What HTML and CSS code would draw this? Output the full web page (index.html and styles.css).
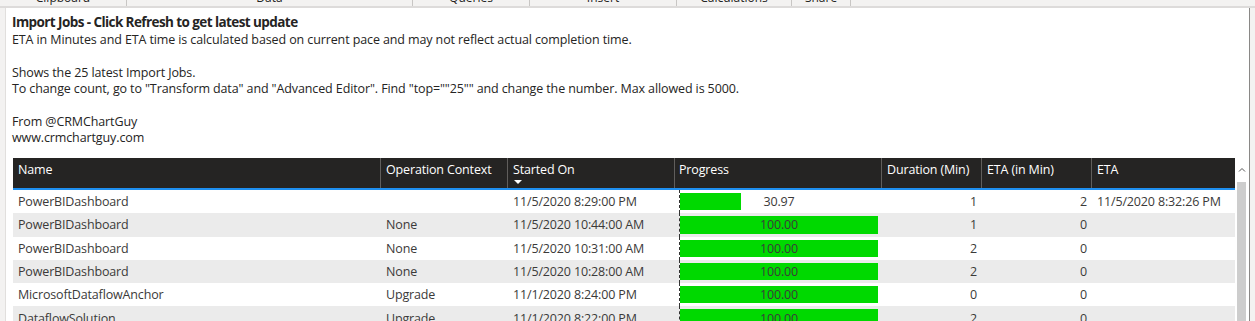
FILE: index.html
```html
<!DOCTYPE html>
<html>
<head>
<meta charset="utf-8">
<link rel="stylesheet" href="styles.css">
</head>
<body>
<div class="ribbon">
  <div class="ribbon-row">
    <div class="grp g-clip">Clipboard</div>
    <div class="grp g-data">Data</div>
    <div class="grp g-queries">Queries</div>
    <div class="grp g-insert">Insert</div>
    <div class="grp g-calc">Calculations</div>
    <div class="grp g-share">Share</div>
  </div>
</div>
<div class="pane">
  <div class="textbox">
    <div class="title">Import Jobs - Click Refresh to get latest update</div>
    <div class="line">ETA in Minutes and ETA time is calculated based on current pace and may not reflect actual completion time.</div>
    <div class="line blank">&nbsp;</div>
    <div class="line">Shows the 25 latest Import Jobs.</div>
    <div class="line">To change count, go to "Transform data" and "Advanced Editor". Find "top=""25"" and change the number. Max allowed is 5000.</div>
    <div class="line blank">&nbsp;</div>
    <div class="line">From @CRMChartGuy</div>
    <div class="line">www.crmchartguy.com</div>
  </div>
  <div class="table-wrap">
    <div class="table">
      <div class="row head">
        <div class="c c-name">Name</div>
        <div class="c c-op">Operation Context</div>
        <div class="c c-start">Started On<span class="sort"></span></div>
        <div class="c c-prog">Progress</div>
        <div class="c c-dur">Duration (Min)</div>
        <div class="c c-etam">ETA (in Min)</div>
        <div class="c c-eta last">ETA</div>
      </div>
      <div class="row">
        <div class="c c-name">PowerBIDashboard</div>
        <div class="c c-op"></div>
        <div class="c c-start">11/5/2020 8:29:00 PM</div>
        <div class="c c-prog"><div class="bar"><div class="fill" style="width:30.97%"></div><span class="val">30.97</span></div></div>
        <div class="c c-dur num">1</div>
        <div class="c c-etam num">2</div>
        <div class="c c-eta">11/5/2020 8:32:26 PM</div>
      </div>
      <div class="row alt">
        <div class="c c-name">PowerBIDashboard</div>
        <div class="c c-op">None</div>
        <div class="c c-start">11/5/2020 10:44:00 AM</div>
        <div class="c c-prog"><div class="bar"><div class="fill" style="width:100%"></div><span class="val">100.00</span></div></div>
        <div class="c c-dur num">1</div>
        <div class="c c-etam num">0</div>
        <div class="c c-eta"></div>
      </div>
      <div class="row">
        <div class="c c-name">PowerBIDashboard</div>
        <div class="c c-op">None</div>
        <div class="c c-start">11/5/2020 10:31:00 AM</div>
        <div class="c c-prog"><div class="bar"><div class="fill" style="width:100%"></div><span class="val">100.00</span></div></div>
        <div class="c c-dur num">2</div>
        <div class="c c-etam num">0</div>
        <div class="c c-eta"></div>
      </div>
      <div class="row alt">
        <div class="c c-name">PowerBIDashboard</div>
        <div class="c c-op">None</div>
        <div class="c c-start">11/5/2020 10:28:00 AM</div>
        <div class="c c-prog"><div class="bar"><div class="fill" style="width:100%"></div><span class="val">100.00</span></div></div>
        <div class="c c-dur num">2</div>
        <div class="c c-etam num">0</div>
        <div class="c c-eta"></div>
      </div>
      <div class="row">
        <div class="c c-name">MicrosoftDataflowAnchor</div>
        <div class="c c-op">Upgrade</div>
        <div class="c c-start">11/1/2020 8:24:00 PM</div>
        <div class="c c-prog"><div class="bar"><div class="fill" style="width:100%"></div><span class="val">100.00</span></div></div>
        <div class="c c-dur num">0</div>
        <div class="c c-etam num">0</div>
        <div class="c c-eta"></div>
      </div>
      <div class="row alt">
        <div class="c c-name">DataflowSolution</div>
        <div class="c c-op">Upgrade</div>
        <div class="c c-start">11/1/2020 8:22:00 PM</div>
        <div class="c c-prog"><div class="bar"><div class="fill" style="width:100%"></div><span class="val">100.00</span></div></div>
        <div class="c c-dur num">2</div>
        <div class="c c-etam num">0</div>
        <div class="c c-eta"></div>
      </div>
    </div>
    <div class="scrollbar">
      <div class="sb-up">
        <svg width="8" height="6" viewBox="0 0 8 6"><path d="M1 4.5 L4 1.5 L7 4.5" fill="none" stroke="#555" stroke-width="1"/></svg>
      </div>
      <div class="sb-thumb"></div>
    </div>
  </div>
</div>
</body>
</html>
```

FILE: styles.css
```css
html, body {
  margin: 0;
  padding: 0;
}
body {
  width: 1255px;
  height: 321px;
  overflow: hidden;
  background: #f3f2f1;
  font-family: "Open Sans", "Noto Sans", sans-serif;
  color: #252423;
}
.ribbon {
  height: 6px;
  overflow: hidden;
  background: #f3f2f1;
  border-bottom: 2px solid #dddbda;
}
.ribbon-row {
  display: flex;
  height: 16px;
  margin-top: -10px;
  font-size: 12px;
  line-height: 16px;
  color: #252423;
}
.grp {
  text-align: center;
  border-right: 1px solid #c8c6c4;
  box-sizing: border-box;
}
.g-clip { width: 127px; }
.g-data { width: 286px; }
.g-queries { width: 117px; }
.g-insert { width: 147px; }
.g-calc { width: 115px; }
.g-share { width: 59px; }

.pane {
  margin-left: 5px;
  width: 1245px;
  height: 313px;
  background: #ffffff;
  border-left: 1px solid #e1dfdd;
  border-right: 1px solid #8a8886;
  box-sizing: border-box;
  overflow: hidden;
}
.textbox {
  padding: 4px 0 0 6px;
  height: 150px;
  box-sizing: border-box;
}
.title {
  font-weight: 700;
  font-size: 13.5px;
  line-height: 20px;
  letter-spacing: -0.58px;
}
.line {
  font-size: 12.5px;
  line-height: 16.33px;
  letter-spacing: -0.11px;
  white-space: nowrap;
}
.table-wrap {
  display: flex;
  margin-left: 7px;
}
.table {
  width: 1222px;
  font-size: 12.5px;
  letter-spacing: -0.15px;
}
.row {
  display: flex;
  height: 23.3px;
  align-items: center;
  color: #3b3a39;
}
.row.alt {
  background: #ebebeb;
}
.row.head {
  height: 30px;
  align-items: stretch;
  background: #252423;
  color: #ffffff;
  border-bottom: 2px solid #1e8ff0;
  box-sizing: content-box;
}
.c {
  box-sizing: border-box;
  padding: 0 5px;
  white-space: nowrap;
  overflow: hidden;
}
.head .c {
  padding-top: 4px;
  line-height: 16px;
  border-right: 1px solid #605e5c;
  display: flex;
  flex-direction: column;
  align-items: flex-start;
}
.head .c.last {
  border-right: none;
}
.sort {
  width: 0;
  height: 0;
  margin: 2px 0 0 1px;
  border-left: 4px solid transparent;
  border-right: 4px solid transparent;
  border-top: 4px solid #ffffff;
}
.c-name { width: 368px; }
.c-op { width: 127px; }
.c-start { width: 167px; }
.c-prog { width: 207px; }
.c-dur { width: 100px; }
.c-etam { width: 110px; }
.c-eta { width: 143px; }
.num { text-align: right; }

.row:not(.head) .c-prog {
  padding: 0;
  height: 100%;
  display: flex;
  align-items: center;
}
.head .c-prog {
  padding-left: 4px;
}
.bar {
  position: relative;
  height: 100%;
  width: 199px;
  margin-left: 4px;
  border-left: 1px dashed #333333;
  box-sizing: border-box;
  display: flex;
  align-items: center;
  justify-content: center;
}
.fill {
  position: absolute;
  left: 0;
  top: 3px;
  bottom: 3px;
  background: #00d900;
}
.val {
  position: relative;
  color: #3b3a39;
}
.scrollbar {
  width: 13px;
  display: flex;
  flex-direction: column;
  align-items: center;
}
.sb-up {
  height: 24px;
  width: 100%;
  display: flex;
  align-items: center;
  justify-content: center;
}
.sb-thumb {
  width: 9px;
  flex: 1;
  height: 140px;
  background: #cdcdcd;
}
```
